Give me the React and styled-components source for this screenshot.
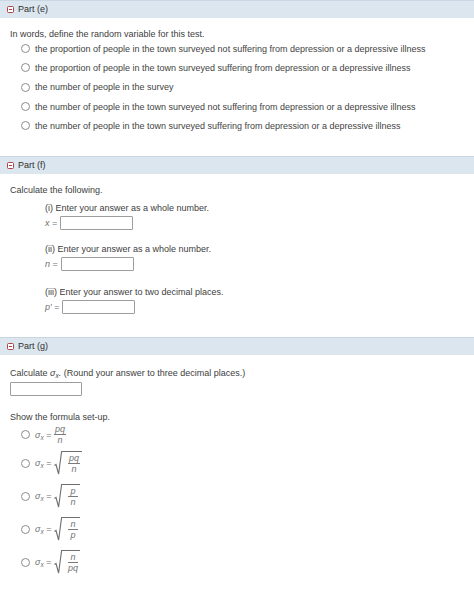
import styled, { createGlobalStyle } from "styled-components"

const GlobalStyle = createGlobalStyle`
    html, body {
        margin:0;
        padding:0;
        background:#ffffff;
    }
    body {
        font-family:"Liberation Sans", Arial, sans-serif;
        font-size:9px;
        color:#404040;
    }
`

const Page = styled.div`
    width:474px;
`

const Section = styled.section`
    display:flex;
    flex-direction:column;
`

const PartHeader = styled.div`
    height:17px;
    border-top:1px solid #c8d6e3;
    background-color:#dce6ef;
    display:flex;
    align-items:center;
    gap:4px;
    padding-left:7px;
    color:#2f2f2f;
    line-height:17px;
`

const CollapseIcon = styled.span`
    width:7px;
    height:7px;
    box-sizing:border-box;
    border:1px solid #a8464b;
    border-radius:1.5px;
    background:#ffffff;
    display:flex;
    align-items:center;
    justify-content:center;

    &::after {
        content:"";
        width:3px;
        height:1px;
        background:#a8464b;
    }
`

const PartBody = styled.div`
    padding:${props => props.$top}px 0 ${props => props.$bottom}px 10px;
    display:flex;
    flex-direction:column;
`

const Prompt = styled.div`
    line-height:${props => props.$lh || 12}px;
    height:${props => props.$lh || 12}px;
    margin-top:${props => props.$mt || 0}px;
    white-space:nowrap;
`

const OptionList = styled.div`
    display:flex;
    flex-direction:column;
    padding-left:11px;
`

const OptionRow = styled.label`
    height:19.3px;
    display:flex;
    align-items:center;
    gap:5px;
    white-space:nowrap;
    color:#434343;
`

const Radio = styled.span`
    width:9px;
    height:9px;
    box-sizing:border-box;
    border:1px solid #8c8c8c;
    border-radius:50%;
    background:#ffffff;
    flex-shrink:0;
`

const SubList = styled.div`
    display:flex;
    flex-direction:column;
    padding-left:35px;
`

const SubPart = styled.div`
    margin-top:${props => props.$gap}px;
    display:flex;
    flex-direction:column;
`

const SubLabel = styled.div`
    line-height:12px;
    height:12px;
    white-space:nowrap;
`

const AnswerRow = styled.div`
    margin-top:2px;
    height:14px;
    display:flex;
    align-items:center;
    gap:3px;
`

const VarLabel = styled.span`
    color:#6f6f6f;
    white-space:pre;
`

const Var = styled.i`
    font-style:italic;
`

const AnswerBox = styled.input`
    width:${props => props.$w || 72}px;
    height:14px;
    box-sizing:border-box;
    margin:0;
    padding:0 3px;
    border:1px solid #9d9d9d;
    border-radius:1px;
    background:#ffffff;
    font:inherit;
    outline:none;
`

const StandaloneBox = styled(AnswerBox)`
    margin-top:3px;
`

const Sub = styled.sub`
    font-size:6.5px;
    line-height:0;
    vertical-align:-2px;
`

const FormulaList = styled.div`
    display:flex;
    flex-direction:column;
    padding-left:11px;
`

const FormulaRow = styled.label`
    height:${props => props.$h}px;
    display:flex;
    align-items:center;
    gap:5px;
    color:#727272;
`

const Expr = styled.span`
    display:flex;
    align-items:center;
`

const Lead = styled.span`
    white-space:pre;
    line-height:12px;
`

const Fraction = styled.span`
    display:inline-flex;
    flex-direction:column;
    align-items:center;
    font-style:italic;
`

const Num = styled.span`
    line-height:10px;
    padding:0 1px;
    border-bottom:1px solid #7a7a7a;
    min-width:8px;
    text-align:center;
`

const Den = styled.span`
    line-height:10px;
    text-align:center;
`

const Sqrt = styled.span`
    display:inline-flex;
    align-items:stretch;
`

const Radicand = styled.span`
    border-top:1px solid #6f6f6f;
    padding:1px 2px 0 6px;
    display:flex;
`

const Radical = () => (
    <svg width="8" height="24" viewBox="0 0 8 24">
        <path d="M0.5 14.5 L2 13.5 L4.6 23 L7.6 0.5 L8 0.5" fill="none" stroke="#6f6f6f" strokeWidth="1.1" />
    </svg>
)

const SigmaX = () => (
    <Var>σ<Sub>x</Sub></Var>
)

const options = [
    "the proportion of people in the town surveyed not suffering from depression or a depressive illness",
    "the proportion of people in the town surveyed suffering from depression or a depressive illness",
    "the number of people in the survey",
    "the number of people in the town surveyed not suffering from depression or a depressive illness",
    "the number of people in the town surveyed suffering from depression or a depressive illness",
]

const subparts = [
    { text: "(i) Enter your answer as a whole number.", v: "x", gap: 6 },
    { text: "(ii) Enter your answer as a whole number.", v: "n", gap: 13 },
    { text: "(iii) Enter your answer to two decimal places.", v: "p\u2032", gap: 15 },
]

const formulas = [
    { num: "pq", den: "n", root: false },
    { num: "pq", den: "n", root: true },
    { num: "p", den: "n", root: true },
    { num: "n", den: "p", root: true },
    { num: "n", den: "pq", root: true },
]

const Frac = ({ num, den }) => (
    <Fraction>
        <Num>{num}</Num>
        <Den>{den}</Den>
    </Fraction>
)

const App = () => {
  return (
    <Page>
        <GlobalStyle />
        <Section>
            <PartHeader><CollapseIcon />Part (e)</PartHeader>
            <PartBody $top={11} $bottom={20.5}>
                <Prompt $lh={10}>In words, define the random variable for this test.</Prompt>
                <OptionList>
                    {options.map(o => (
                        <OptionRow key={o}>
                            <Radio />
                            <span>{o}</span>
                        </OptionRow>
                    ))}
                </OptionList>
            </PartBody>
        </Section>

        <Section>
            <PartHeader><CollapseIcon />Part (f)</PartHeader>
            <PartBody $top={10} $bottom={23}>
                <Prompt>Calculate the following.</Prompt>
                <SubList>
                    {subparts.map(s => (
                        <SubPart key={s.text} $gap={s.gap}>
                            <SubLabel>{s.text}</SubLabel>
                            <AnswerRow>
                                <VarLabel><Var>{s.v}</Var> =</VarLabel>
                                <AnswerBox type="text" $w={73} />
                            </AnswerRow>
                        </SubPart>
                    ))}
                </SubList>
            </PartBody>
        </Section>

        <Section>
            <PartHeader><CollapseIcon />Part (g)</PartHeader>
            <PartBody $top={12} $bottom={18}>
                <Prompt>Calculate <Var>σ<Sub>x</Sub>.</Var> (Round your answer to three decimal places.)</Prompt>
                <StandaloneBox type="text" $w={72} />
                <Prompt $mt={15}>Show the formula set-up.</Prompt>
                <FormulaList>
                    {formulas.map((f, i) => (
                        <FormulaRow key={i} $h={i === 0 ? 24 : 33}>
                            <Radio />
                            <Expr>
                                <Lead><SigmaX /> = </Lead>
                                {f.root ? (
                                    <Sqrt>
                                        <Radical />
                                        <Radicand><Frac num={f.num} den={f.den} /></Radicand>
                                    </Sqrt>
                                ) : (
                                    <Frac num={f.num} den={f.den} />
                                )}
                            </Expr>
                        </FormulaRow>
                    ))}
                </FormulaList>
            </PartBody>
        </Section>
    </Page>
  )
}

export default App
